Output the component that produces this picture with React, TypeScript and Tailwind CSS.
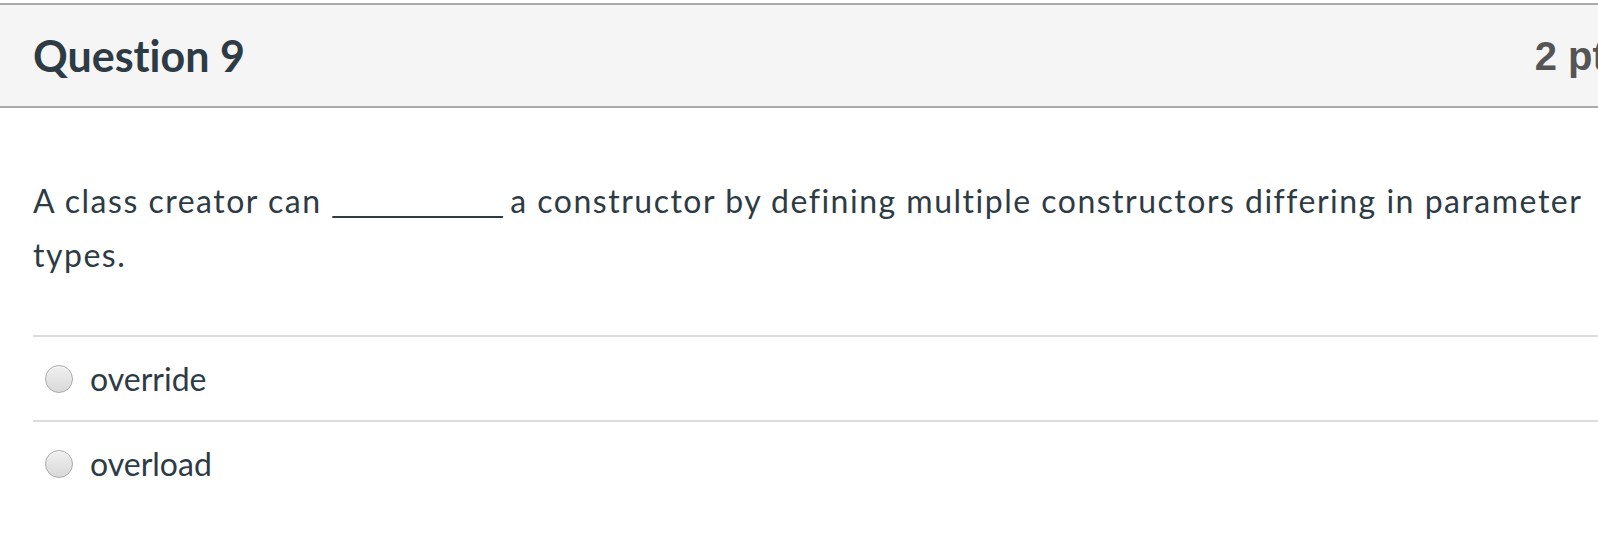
const options = ['override', 'overload'];

function Radio() {
  return (
    <span className="block h-[28px] w-[28px] shrink-0 rounded-full border border-[#a9a9a9] bg-gradient-to-b from-[#f0f0f0] to-[#d9d9d9] shadow-[inset_0_1px_1px_rgba(255,255,255,0.8)]" />
  );
}

export default function App() {
  return (
    <div className="h-[549px] w-[1598px] overflow-hidden bg-white font-['Lato','Noto_Sans',sans-serif] text-[#2d3b45] [font-variant-ligatures:none]">
      <div className="w-[1680px] pt-[3px]">
        <div className="flex h-[105px] items-center justify-between border-y-2 border-[#a9a9a9] bg-[#f5f5f5] px-[33px]">
          <h2 className="text-[43px] font-bold leading-none">Question 9</h2>
          <span className="mr-[19px] whitespace-nowrap font-['Liberation_Sans',Arial,sans-serif] text-[40px] font-bold leading-none text-[#555]">
            2 pts
          </span>
        </div>

        <div className="px-[33px] pt-[66px]">
          <p className="pr-[50px] text-[32px] leading-[54px] tracking-[1.5px]">
            A class creator can <span className="tracking-[-3.4px]">_______________</span> a constructor by defining multiple
            constructors differing in parameter types.
          </p>

          <div className="mt-[53px]">
            {options.map((option) => (
              <label key={option} className="flex h-[85px] items-center border-t-2 border-[#dddddd]">
                <span className="ml-[12px] mr-[17px]">
                  <Radio />
                </span>
                <span className="text-[32px] leading-none">{option}</span>
              </label>
            ))}
          </div>
        </div>
      </div>
    </div>
  );
}
